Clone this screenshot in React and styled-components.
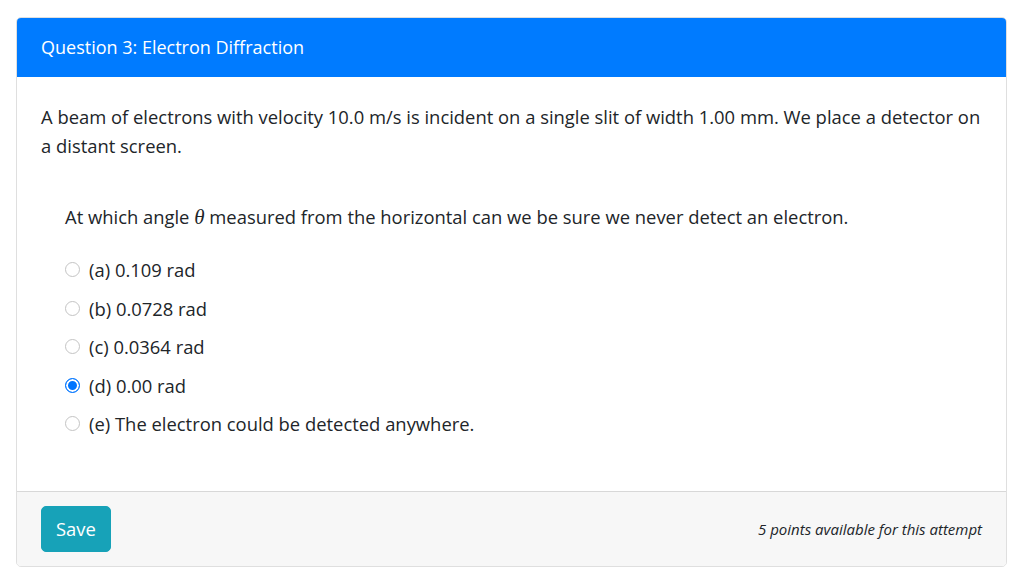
import React from "react";
import styled, { createGlobalStyle } from "styled-components";

const options = [
  { key: "a", text: "0.109 rad" },
  { key: "b", text: "0.0728 rad" },
  { key: "c", text: "0.0364 rad" },
  { key: "d", text: "0.00 rad" },
  { key: "e", text: "The electron could be detected anywhere." },
];

export default function App() {
  return (
    <>
      <GlobalStyle />
      <Card>
        <CardHeader>Question 3: Electron Diffraction</CardHeader>
        <CardBody>
          <Lead>
            A beam of electrons with velocity 10.0 m/s is incident on a single slit of width 1.00 mm. We
            place a detector on a distant screen.
          </Lead>
          <QuestionBlock>
            <Prompt>
              At which angle <Theta>θ</Theta> measured from the horizontal can we be sure we never detect an
              electron.
            </Prompt>
            <OptionList>
              {options.map((o) => (
                <Option key={o.key}>
                  <Radio checked={o.key === "d"} />
                  <span>
                    ({o.key}) {o.text}
                  </span>
                </Option>
              ))}
            </OptionList>
          </QuestionBlock>
        </CardBody>
        <CardFooter>
          <SaveButton>Save</SaveButton>
          <Points>5 points available for this attempt</Points>
        </CardFooter>
      </Card>
    </>
  );
}

/* ===== styled-components ===== */
const GlobalStyle = createGlobalStyle`
  body {
    margin: 0;
    background: #fff;
    font-family: "Open Sans", "Noto Sans", sans-serif;
    color: #212529;
  }
  * { box-sizing: border-box; }
`;

const Card = styled.div`
  margin: 17px 17px 0 16px;
  border: 1px solid rgba(0, 0, 0, 0.125);
  border-radius: 5px;
  overflow: hidden;
`;

const CardHeader = styled.div`
  background: #007bff;
  color: #fff;
  font-size: 18px;
  line-height: 30px;
  padding: 14px 24px 15px;
`;

const CardBody = styled.div`
  padding: 25px 24px 52px;
  font-size: 18.4px;
`;

const Lead = styled.p`
  margin: 0 0 42px;
  line-height: 29px;
`;

const QuestionBlock = styled.div`
  padding-left: 24px;
`;

const Prompt = styled.p`
  margin: 0 0 23px;
  line-height: 30px;
`;

const Theta = styled.i`
  font-family: "Liberation Serif", serif;
  font-size: 21px;
`;

const OptionList = styled.div`
  display: flex;
  flex-direction: column;
  gap: 8.5px;
`;

const Option = styled.label`
  display: flex;
  align-items: center;
  gap: 9px;
  line-height: 30px;
`;

const Radio = styled.span`
  width: 15px;
  height: 15px;
  border-radius: 50%;
  flex: none;
  border: 1px solid ${(p) => (p.checked ? "#0075ff" : "#c4c4c4")};
  background: ${(p) => (p.checked ? "#0075ff" : "#fff")};
  box-shadow: ${(p) => (p.checked ? "inset 0 0 0 2px #fff" : "none")};
  margin-top: -1px;
`;

const CardFooter = styled.div`
  background: #f7f7f7;
  border-top: 1px solid rgba(0, 0, 0, 0.125);
  padding: 14px 24px 14px;
  display: flex;
  align-items: center;
  justify-content: space-between;
`;

const SaveButton = styled.button`
  font-family: inherit;
  font-size: 18.4px;
  line-height: 30px;
  color: #fff;
  background: #17a2b8;
  border: 1px solid #17a2b8;
  border-radius: 5px;
  padding: 7px 14px;
  cursor: pointer;
`;

const Points = styled.em`
  font-size: 15px;
  color: #212529;
`;
